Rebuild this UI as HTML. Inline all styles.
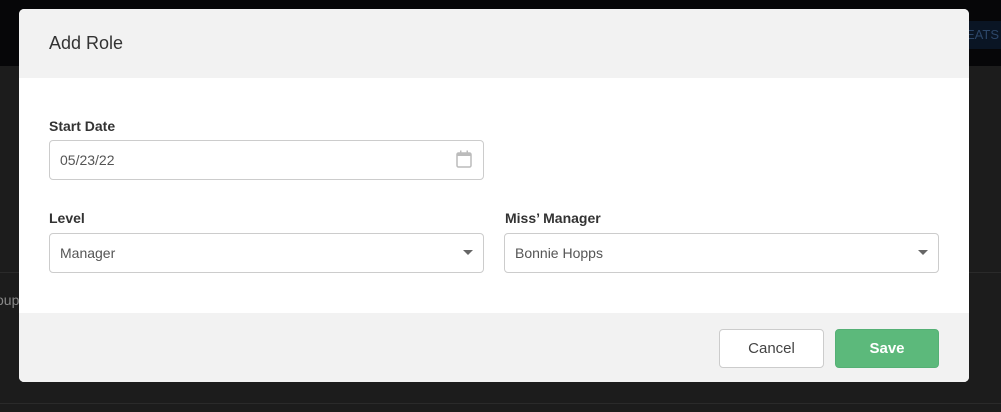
<!DOCTYPE html>
<html><head><style>
*{box-sizing:border-box;margin:0;padding:0}
body{width:1001px;height:412px;background:#1c1c1c;font-family:"Liberation Sans",sans-serif;position:relative;overflow:hidden}
.top{position:absolute;left:0;top:0;width:1001px;height:66px;background:#060608}
.eats{position:absolute;left:962px;top:21px;width:45px;height:28px;background:#0a1524;color:#2c4668;font-size:13px;line-height:28px;padding-left:4px}
.ln{position:absolute;left:0;width:1001px;height:1px;background:#2a2a2a}
.oup{position:absolute;left:-4px;top:292px;color:#888;font-size:14px}
.modal{position:absolute;left:19px;top:9px;width:950px;height:373px;background:#fff;border-radius:5px;overflow:hidden}
.hd{height:69px;background:#f2f2f2;padding-left:30px;font-size:18px;color:#333;line-height:68px}
.ft{position:absolute;left:0;top:304px;width:950px;height:69px;background:#f2f2f2}
.lbl{position:absolute;font-size:14px;font-weight:bold;color:#333}
.inp{position:absolute;height:40px;border:1px solid #ccc;border-radius:4px;font-size:14px;color:#555;line-height:38px;padding-left:10px;background:#fff}
.car{position:absolute;right:10px;top:16px;width:0;height:0;border-left:5px solid transparent;border-right:5px solid transparent;border-top:5px solid #666}
.btn{position:absolute;top:16px;height:39px;border-radius:4px;font-size:15px;text-align:center;line-height:38px}
</style></head><body>
<div class="top"></div><div class="eats">EATS</div>
<div class="ln" style="top:272px"></div><div class="ln" style="top:403px"></div>
<div class="oup">oup</div>
<div class="modal">
<div class="hd">Add Role</div>
<div class="lbl" style="left:30px;top:109px">Start Date</div>
<div class="inp" style="left:30px;top:131px;width:435px">05/23/22
<svg style="position:absolute;right:11px;top:9px" width="16" height="18" viewBox="0 0 16 18"><rect x="1" y="3" width="14" height="14" rx="1.5" fill="none" stroke="#bbb" stroke-width="1.5"/><rect x="1" y="3" width="14" height="3" fill="#bbb"/><rect x="4" y="0.5" width="1.5" height="4" fill="#bbb"/><rect x="10.5" y="0.5" width="1.5" height="4" fill="#bbb"/></svg></div>
<div class="lbl" style="left:30px;top:201px">Level</div>
<div class="inp" style="left:30px;top:224px;width:435px">Manager<div class="car"></div></div>
<div class="lbl" style="left:486px;top:201px">Miss’ Manager</div>
<div class="inp" style="left:485px;top:224px;width:435px">Bonnie Hopps<div class="car"></div></div>
<div class="ft">
<div class="btn" style="left:700px;width:105px;border:1px solid #ccc;background:#fff;color:#444">Cancel</div>
<div class="btn" style="left:816px;width:104px;background:#5cb97b;color:#fff;font-weight:bold;border:1px solid #55b075">Save</div>
</div>
</div>
</body></html>
